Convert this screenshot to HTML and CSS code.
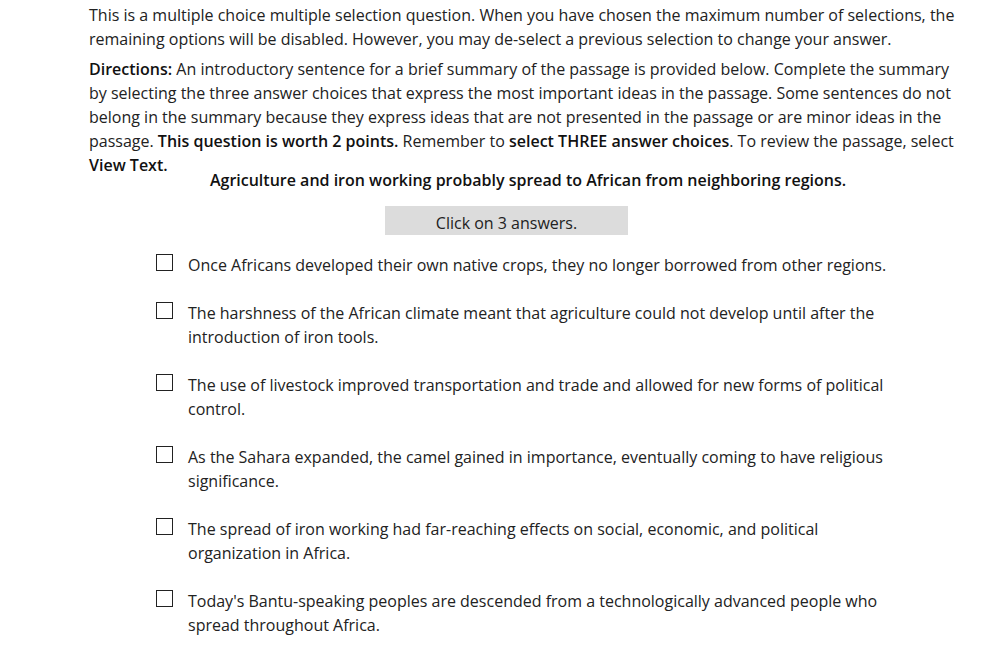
FILE: index.html
```html
<!DOCTYPE html>
<html lang="en">
<head>
<meta charset="utf-8">
<title>Summary question</title>
<link rel="stylesheet" href="styles.css">
</head>
<body>
<main class="content">
  <p class="intro">This is a multiple choice multiple selection question. When you have chosen the maximum number of selections, the remaining options will be disabled. However, you may de-select a previous selection to change your answer.</p>
  <p class="directions"><b>Directions:</b> An introductory sentence for a brief summary of the passage is provided below. Complete the summary by selecting the three answer choices that express the most important ideas in the passage. Some sentences do not belong in the summary because they express ideas that are not presented in the passage or are minor ideas in the passage. <b>This question is worth 2 points.</b> Remember to <b>select THREE answer choices</b>. To review the passage, select <b>View Text.</b></p>
  <h2 class="title">Agriculture and iron working probably spread to African from neighboring regions.</h2>
  <div class="hint">Click on 3 answers.</div>
  <ul class="options">
    <li class="option"><span class="box"></span><span class="label">Once Africans developed their own native crops, they no longer borrowed from other regions.</span></li>
    <li class="option"><span class="box"></span><span class="label">The harshness of the African climate meant that agriculture could not develop until after the introduction of iron tools.</span></li>
    <li class="option"><span class="box"></span><span class="label">The use of livestock improved transportation and trade and allowed for new forms of political control.</span></li>
    <li class="option"><span class="box"></span><span class="label">As the Sahara expanded, the camel gained in importance, eventually coming to have religious significance.</span></li>
    <li class="option"><span class="box"></span><span class="label">The spread of iron working had far-reaching effects on social, economic, and political organization in Africa.</span></li>
    <li class="option"><span class="box"></span><span class="label">Today's Bantu-speaking peoples are descended from a technologically advanced people who spread throughout Africa.</span></li>
  </ul>
</main>
</body>
</html>
```

FILE: styles.css
```css
html, body {
  margin: 0;
  padding: 0;
  background: #ffffff;
}

body {
  font-family: "Open Sans", "DejaVu Sans", sans-serif;
  font-size: 16px;
  line-height: 24px;
  color: #222222;
}

.content {
  width: 878px;
  margin-left: 89px;
  padding-top: 3px;
}

.intro {
  margin: 0 0 6px;
}

.directions {
  margin: 0;
}

.directions b {
  font-weight: 600;
  color: #111111;
}

.title {
  margin: -9px 0 0;
  font-size: 16px;
  line-height: 24px;
  font-weight: 600;
  color: #111111;
  text-align: center;
}

.hint {
  width: 243px;
  margin: 14px 0 0 296px;
  padding: 5px 0 0;
  background: #dcdcdc;
  text-align: center;
}

.options {
  list-style: none;
  margin: 18px 0 0 67px;
  padding: 0;
  display: flex;
  flex-direction: column;
  gap: 24px;
}

.option {
  display: flex;
  align-items: flex-start;
  gap: 15px;
}

.box {
  flex: none;
  box-sizing: border-box;
  width: 17px;
  height: 17px;
  margin-top: 1px;
  border: 1.5px solid #222222;
  background: #ffffff;
}

.label {
  width: 712px;
}
```
